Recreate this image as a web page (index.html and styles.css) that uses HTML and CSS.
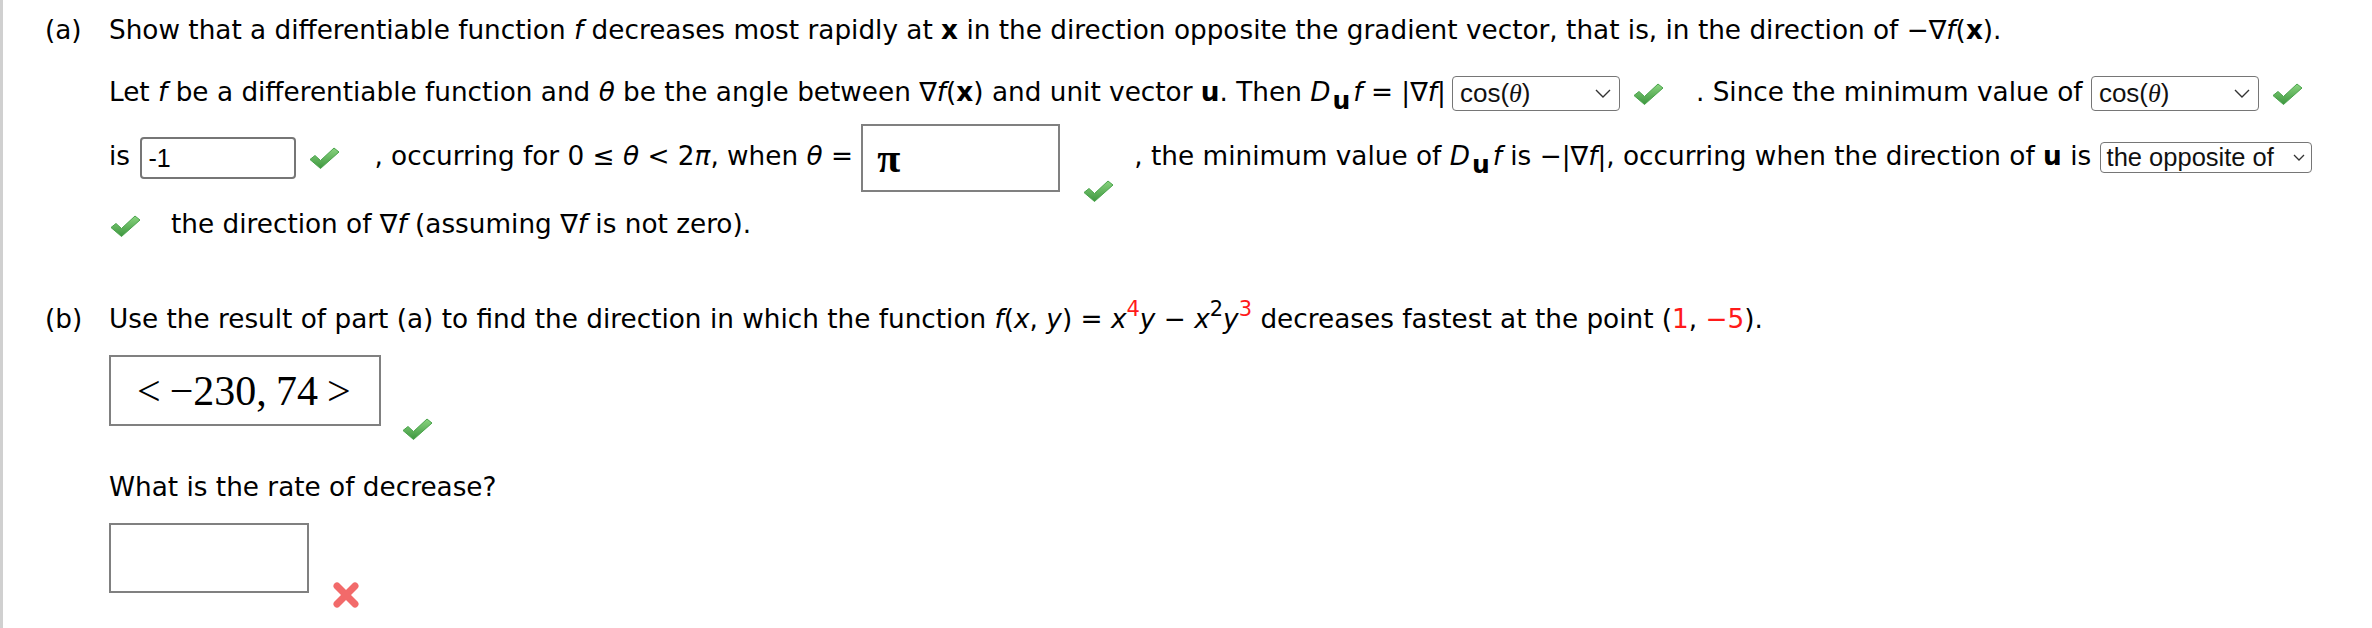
FILE: index.html
```html
<!DOCTYPE html>
<html>
<head>
<meta charset="utf-8">
<link rel="stylesheet" href="styles.css">
</head>
<body>
<svg class="defs" width="0" height="0"><defs><linearGradient id="g1" x1="0" y1="0" x2="0" y2="1"><stop offset="0" stop-color="#8ad47f"/><stop offset="1" stop-color="#3d963f"/></linearGradient></defs></svg>
<div class="page">
  <div class="part part-a">
    <div class="label">(a)</div>
    <div class="body">
      <div class="line l1">Show that a differentiable function <i>f</i> decreases most rapidly at <b>x</b> in the direction opposite the gradient vector, that is, in the direction of −∇<i>f</i>(<b>x</b>).</div>
      <div class="line l2">Let <i>f</i> be a differentiable function and <i>θ</i> be the angle between ∇<i>f</i>(<b>x</b>) and unit vector <b>u</b>. Then <i>D</i><sub class="du">u</sub><i>f</i> = |∇<i>f</i>|<span class="select s-cos first-sel"><span class="sel-text">cos(<i class="th">θ</i>)</span><svg class="chev" viewBox="0 0 16 9"><path d="M1 1 L8 8 L15 1" fill="none" stroke="#333" stroke-width="1.4"/></svg></span><svg class="check" viewBox="0 0 32 24"><path d="M2 13.5 L7 9.5 L12.5 14.5 L26 2 L31 6 L12.5 22.5 Z" fill="url(#g1)" stroke="#4aa44c" stroke-width="1" stroke-linejoin="round"/></svg><span class="after-check">. Since the minimum value of</span> <span class="select s-cos"><span class="sel-text">cos(<i class="th">θ</i>)</span><svg class="chev" viewBox="0 0 16 9"><path d="M1 1 L8 8 L15 1" fill="none" stroke="#333" stroke-width="1.4"/></svg></span><svg class="check" viewBox="0 0 32 24"><path d="M2 13.5 L7 9.5 L12.5 14.5 L26 2 L31 6 L12.5 22.5 Z" fill="url(#g1)" stroke="#4aa44c" stroke-width="1" stroke-linejoin="round"/></svg></div>
      <div class="line l3">is <span class="input">-1</span><svg class="check" viewBox="0 0 32 24"><path d="M2 13.5 L7 9.5 L12.5 14.5 L26 2 L31 6 L12.5 22.5 Z" fill="url(#g1)" stroke="#4aa44c" stroke-width="1" stroke-linejoin="round"/></svg><span class="after-check tight">, occurring for 0 ≤ <i>θ</i> &lt; 2<i>π</i>, when <i>θ</i> =</span> <span class="boxgroup"><span class="mathbox pibox"><span class="pi">π</span></span><svg class="check low" viewBox="0 0 32 24"><path d="M2 13.5 L7 9.5 L12.5 14.5 L26 2 L31 6 L12.5 22.5 Z" fill="url(#g1)" stroke="#4aa44c" stroke-width="1" stroke-linejoin="round"/></svg></span><span class="after-pi">, the minimum value of <i>D</i><sub class="du">u</sub><i>f</i> is −|∇<i>f</i>|, occurring when the direction of <b>u</b> is</span> <span class="select s-opp"><span class="sel-text">the opposite of</span><svg class="chev small" viewBox="0 0 12 7"><path d="M1 1 L6 6 L11 1" fill="none" stroke="#333" stroke-width="1.3"/></svg></span></div>
      <div class="line l4"><svg class="check first" viewBox="0 0 32 24"><path d="M2 13.5 L7 9.5 L12.5 14.5 L26 2 L31 6 L12.5 22.5 Z" fill="url(#g1)" stroke="#4aa44c" stroke-width="1" stroke-linejoin="round"/></svg>the direction of ∇<i>f</i> (assuming ∇<i>f</i> is not zero).</div>
    </div>
  </div>
  <div class="part part-b">
    <div class="label">(b)</div>
    <div class="body">
      <div class="line lb">Use the result of part (a) to find the direction in which the function <i>f</i>(<i>x</i>, <i>y</i>) = <i>x</i><sup class="red">4</sup><i>y</i> − <i>x</i><sup>2</sup><i>y</i><sup class="red">3</sup> decreases fastest at the point (<span class="red">1</span>, <span class="red">−5</span>).</div>
      <div class="boxgroup block b-ans">
        <span class="mathbox vecbox"><span class="vec">&lt;<span class="rel"></span>−230,<span class="thin"></span>74<span class="rel"></span>&gt;</span></span><svg class="check low" viewBox="0 0 32 24"><path d="M2 13.5 L7 9.5 L12.5 14.5 L26 2 L31 6 L12.5 22.5 Z" fill="url(#g1)" stroke="#4aa44c" stroke-width="1" stroke-linejoin="round"/></svg>
      </div>
      <div class="line lq">What is the rate of decrease?</div>
      <div class="boxgroup block b-rate">
        <span class="mathbox emptybox"></span><svg class="cross" viewBox="0 0 30 28"><g stroke="#f26a6a" stroke-width="7" stroke-linecap="round"><path d="M6 5 L24 23"/><path d="M24 5 L6 23"/></g></svg>
      </div>
    </div>
  </div>
</div>
</body>
</html>
```
FILE: styles.css
```css
html, body {
  margin: 0;
  padding: 0;
  background: #fff;
}
body {
  font-family: "DejaVu Sans", Verdana, sans-serif;
  font-size: 26.3px;
  color: #000;
}
.defs {
  position: absolute;
  width: 0;
  height: 0;
}
.page {
  border-left: 3px solid #d0d0d0;
  height: 628px;
  box-sizing: border-box;
  padding: 12px 0 0 42px;
  overflow: hidden;
}
.part {
  display: grid;
  grid-template-columns: 64px auto;
}
.label {
  line-height: 36px;
  white-space: nowrap;
}
.part-b {
  margin-top: 59px;
}
.line {
  white-space: nowrap;
  line-height: 36px;
  height: 36px;
}
.l2 { margin-top: 26px; }
.l3 { margin-top: 12px; height: 68px; line-height: 68px; }
.l4 { margin-top: 16px; }
i { font-style: italic; }
b { font-weight: bold; }
sub.du {
  font-weight: bold;
  font-size: 25px;
  vertical-align: -8px;
  line-height: 0;
  margin: 0 3px 0 2px;
}
sup {
  font-size: 21px;
  vertical-align: 12px;
  line-height: 0;
}
.red { color: #ff1a1a; }
.select {
  display: inline-flex;
  align-items: center;
  justify-content: space-between;
  box-sizing: border-box;
  border: 1.5px solid #767676;
  border-radius: 4px;
  background: #fff;
  font-family: "Liberation Sans", Arial, sans-serif;
  font-size: 26px;
  line-height: 1;
  vertical-align: middle;
  padding: 0 8px 0 7px;
  color: #111;
}
.s-cos {
  width: 168px;
  height: 35px;
}
.s-cos.first-sel {
  margin-left: 6px;
}
.s-opp {
  width: 212px;
  height: 31px;
  font-size: 25.5px;
  padding: 0 6px 0 6px;
}
.th {
  font-family: "Liberation Serif", serif;
}
.chev {
  width: 16px;
  height: 9px;
}
.chev.small {
  width: 12px;
  height: 7px;
}
.check {
  width: 32px;
  height: 24px;
  vertical-align: middle;
  margin: 0 14px 0 12px;
}
.check.first {
  margin: 0 30px 0 0;
}
.after-check { margin-left: 18px; }
.after-check.tight { margin-left: 20px; }
.input {
  display: inline-block;
  box-sizing: border-box;
  width: 156px;
  height: 42px;
  border: 2px solid #767676;
  border-radius: 4px;
  font-family: "Liberation Sans", Arial, sans-serif;
  font-size: 25px;
  line-height: 38px;
  padding-left: 6px;
  vertical-align: middle;
  margin-left: 2px;
}
.boxgroup {
  display: inline-flex;
  align-items: flex-end;
  vertical-align: middle;
}
.boxgroup.block {
  display: flex;
}
.mathbox {
  display: inline-flex;
  align-items: center;
  box-sizing: border-box;
  border: 2px solid #808080;
  background: #fff;
}
.pibox {
  width: 199px;
  height: 68px;
  padding-left: 14px;
}
.pi {
  font-family: "Liberation Serif", serif;
  font-weight: bold;
  font-size: 42px;
  line-height: 1;
}
.check.low {
  margin: 0 0 -11px 22px;
  flex: none;
}
.after-pi { margin-left: 20px; }
.b-ans { margin-top: 18px; }
.vecbox {
  width: 272px;
  height: 71px;
  padding-left: 26px;
}
.vec {
  font-family: "Liberation Serif", serif;
  font-size: 42px;
  line-height: 1;
}
.vec .rel {
  display: inline-block;
  width: 9px;
}
.vec .thin {
  display: inline-block;
  width: 9px;
}
.b-ans .check.low { margin: 0 0 -15px 20px; }
.lq { margin-top: 43px; }
.b-rate { margin-top: 18px; }
.emptybox {
  width: 200px;
  height: 70px;
}
.cross {
  width: 30px;
  height: 28px;
  margin: 0 0 -16px 22px;
  flex: none;
}
```
